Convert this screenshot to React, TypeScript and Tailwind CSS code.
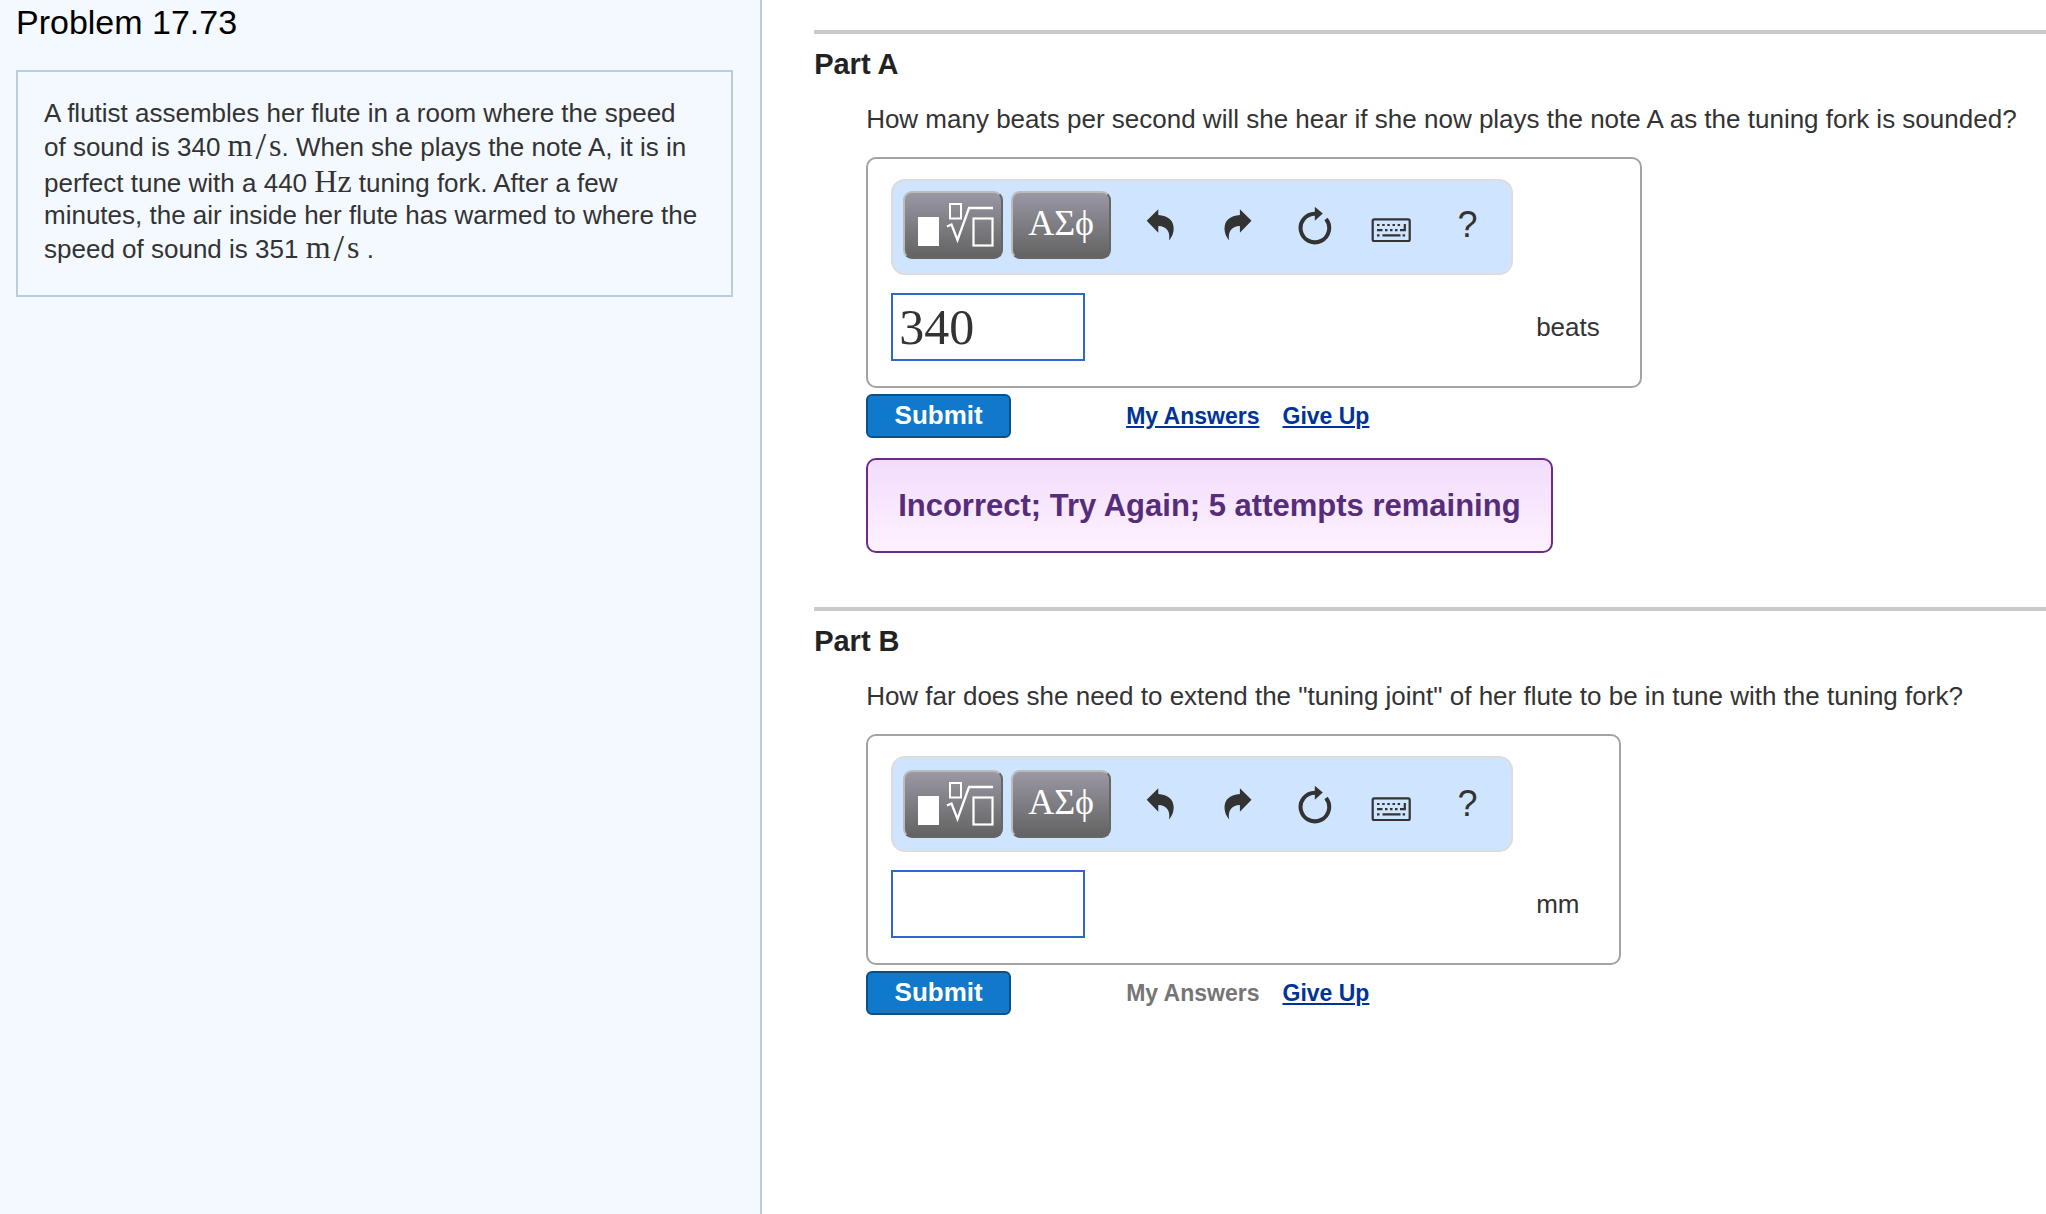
import { useState, type ReactNode } from "react"
import clsx from "clsx"

function MetersPerSecond() {
  return (
    <span className="font-['Liberation_Serif',serif] text-[32px] leading-none">
      m<span className="mx-[3px] align-[-3px] text-[38px] leading-[0]">/</span>s
    </span>
  )
}

function TemplatesIcon() {
  return (
    <svg viewBox="0 0 96 64" className="h-16 w-24" fill="none" stroke="white" strokeWidth="2">
      <rect x="13" y="24" width="21" height="29" fill="white" stroke="none" />
      <rect x="45" y="11" width="11" height="14.500" />
      <path d="M42 33.500l4.500-2L52.500 47 64 15H88" strokeWidth="2.300" />
      <rect x="68.500" y="25.500" width="19" height="27" strokeWidth="2.200" />
    </svg>
  )
}

function UndoIcon() {
  return (
    <svg viewBox="0 0 40 40" className="size-10" fill="#333">
      <path d="M6.700 15.700L18.300 4.300V10C28 10.500 33.700 15.500 33.700 23.500C33.700 28 32 32 29 35.500C30.500 27 27 21.300 18.300 21V27.700Z" />
    </svg>
  )
}

function RedoIcon() {
  return (
    <svg viewBox="0 0 40 40" className="size-10" fill="#333">
      <path d="M34.500 15.700L22.900 4.300V10C13.200 10.500 7.500 15.500 7.500 23.500C7.500 28 9.200 32 12.200 35.500C10.700 27 14.200 21.300 22.900 21V27.700Z" />
    </svg>
  )
}

function ResetIcon() {
  return (
    <svg viewBox="0 0 40 40" className="size-10">
      <path d="M21 8.700A14.300 14.300 0 1 0 32 14" fill="none" stroke="#333" strokeWidth="4" />
      <path d="M20.800 1.700L28.800 8.500L20.800 15.700Z" fill="#333" />
    </svg>
  )
}

function KeyboardIcon() {
  return (
    <svg viewBox="0 0 40 40" className="size-10" fill="none" stroke="#333">
      <rect x="1.700" y="14.300" width="37" height="21.700" rx="1.500" strokeWidth="2.200" />
      <path
        strokeWidth="2.200"
        d="M6 20h2.500M11.200 20h2.500M16.300 20h2.500M21.500 20H24M26.600 20h2.500M6 25.200h5.500M14 25.200h2.500M19 25.200h2.500M24 25.200h2.500M29 25.200h4.800V19M6 30.400h2.500M11.500 30.400h18M31.600 30.400h2.500"
      />
    </svg>
  )
}

function MenuButton({ label, children }: { label: string; children: ReactNode }) {
  return (
    <button
      type="button"
      aria-label={label}
      className="flex h-[68px] w-[100px] items-center justify-center rounded-[9px] border-2 border-t-[#bbb] border-r-[#666] border-b-[#666] border-l-[#bbb] bg-linear-to-b from-[#9a98a4] to-[#636363] text-white"
    >
      {children}
    </button>
  )
}

function ToolButton({ label, children }: { label: string; children: ReactNode }) {
  return (
    <button type="button" aria-label={label} className="flex h-[68px] w-[77px] items-center justify-center">
      {children}
    </button>
  )
}

function Toolbar({ className }: { className: string }) {
  return (
    <div className={clsx("flex h-24 w-[622px] items-start rounded-[14px] border-2 border-[#ddd] bg-[#cfe5ff] pl-[10px]", className)}>
      <div className="mr-[10px] flex gap-2">
        <MenuButton label="Templates">
          <TemplatesIcon />
        </MenuButton>
        <MenuButton label="Symbols">
          <span className="pb-1 font-['Liberation_Serif','DejaVu_Serif',serif] text-[36px] leading-10">ΑΣϕ</span>
        </MenuButton>
      </div>
      <ToolButton label="Undo">
        <UndoIcon />
      </ToolButton>
      <ToolButton label="Redo">
        <RedoIcon />
      </ToolButton>
      <ToolButton label="Reset">
        <ResetIcon />
      </ToolButton>
      <ToolButton label="Keyboard shortcuts">
        <KeyboardIcon />
      </ToolButton>
      <ToolButton label="Help">
        <span className="text-[36px] leading-10 text-[#333]">?</span>
      </ToolButton>
    </div>
  )
}

interface PartProps {
  name: string
  question: string
  unit: string
  initial?: string
  toolbarClass: string
  attempted?: boolean
  feedback?: string
}

function Part({ name, question, unit, initial = "", toolbarClass, attempted, feedback }: PartProps) {
  const [answer, setAnswer] = useState(initial)

  return (
    <section className="border-t-4 border-[#cacaca] pt-3">
      <h2 className="text-[29px] leading-9 font-bold text-[#222]">{name}</h2>
      <form className="mt-[21px] flex flex-col items-start pl-[52px]" onSubmit={(e) => e.preventDefault()}>
        <label htmlFor={name} className="text-[26px] leading-8">
          {question}
        </label>
        <div className="mt-[22px] rounded-[10px] border-2 border-[#a3a3a3] pt-5 pb-[25px] pl-[23px]">
          <Toolbar className={toolbarClass} />
          <div className="mt-[18px] flex items-center pr-10">
            <input
              id={name}
              value={answer}
              onChange={(e) => setAnswer(e.target.value)}
              className="mr-[451px] h-[68px] w-[194px] border-2 border-[#2f66d0] bg-white px-[6px] font-['Liberation_Serif',serif] text-[50px] outline-none"
            />
            <span className="text-[26px] leading-8">{unit}</span>
          </div>
        </div>
        <div className="mt-[6px] flex items-center text-[23px] font-bold">
          <button
            type="submit"
            className="mr-[115px] h-11 w-[145px] rounded-md border-2 border-[#0a4f86] bg-[#1079cb] pb-[2px] text-[26px] leading-8 text-white"
          >
            Submit
          </button>
          {attempted ? (
            <a href="#answers" className="text-[#003399] underline">
              My Answers
            </a>
          ) : (
            <span className="text-[#757575]">My Answers</span>
          )}
          <a href="#give-up" className="ml-[23px] text-[#003399] underline">
            Give Up
          </a>
        </div>
        {feedback && (
          <p className="mt-5 rounded-[10px] border-2 border-[#6a2c88] bg-linear-to-b from-[#f2dcfc] to-[#fef2ff] px-[30px] pt-[26px] pb-[25px] text-[31px] leading-10 font-bold text-[#552d7a]">
            {feedback}
          </p>
        )}
      </form>
    </section>
  )
}

export default function App() {
  return (
    <div className="flex min-h-screen bg-white font-['Liberation_Sans',Arial,sans-serif] text-[#333]">
      <aside className="w-[37.25%] shrink-0 border-r-2 border-[#b9cde0] bg-[#f4f9ff] pt-1 pr-[27px] pl-4">
        <h1 className="text-[34px] leading-9 text-black">Problem 17.73</h1>
        <p className="mt-[30px] border-2 border-[#b9cde0] pt-[25px] pr-7 pb-[30px] pl-[26px] text-[26px] leading-8">
          A flutist assembles her flute in a room where the speed of sound is 340 <MetersPerSecond />. When she plays the
          note A, it is in perfect tune with a 440{" "}
          <span className="font-['Liberation_Serif',serif] text-[32px] leading-9">Hz</span> tuning fork. After a few
          minutes, the air inside her flute has warmed to where the speed of sound is 351 <MetersPerSecond /> .
        </p>
      </aside>
      <main className="flex min-w-0 flex-1 flex-col gap-[54px] pt-[30px] pl-[52px]">
        <Part
          name="Part A"
          question="How many beats per second will she hear if she now plays the note A as the tuning fork is sounded?"
          unit="beats"
          initial="340"
          toolbarClass="pt-[10px]"
          attempted
          feedback="Incorrect; Try Again; 5 attempts remaining"
        />
        <Part
          name="Part B"
          question={'How far does she need to extend the "tuning joint" of her flute to be in tune with the tuning fork?'}
          unit="mm"
          toolbarClass="pt-3"
        />
      </main>
    </div>
  )
}
